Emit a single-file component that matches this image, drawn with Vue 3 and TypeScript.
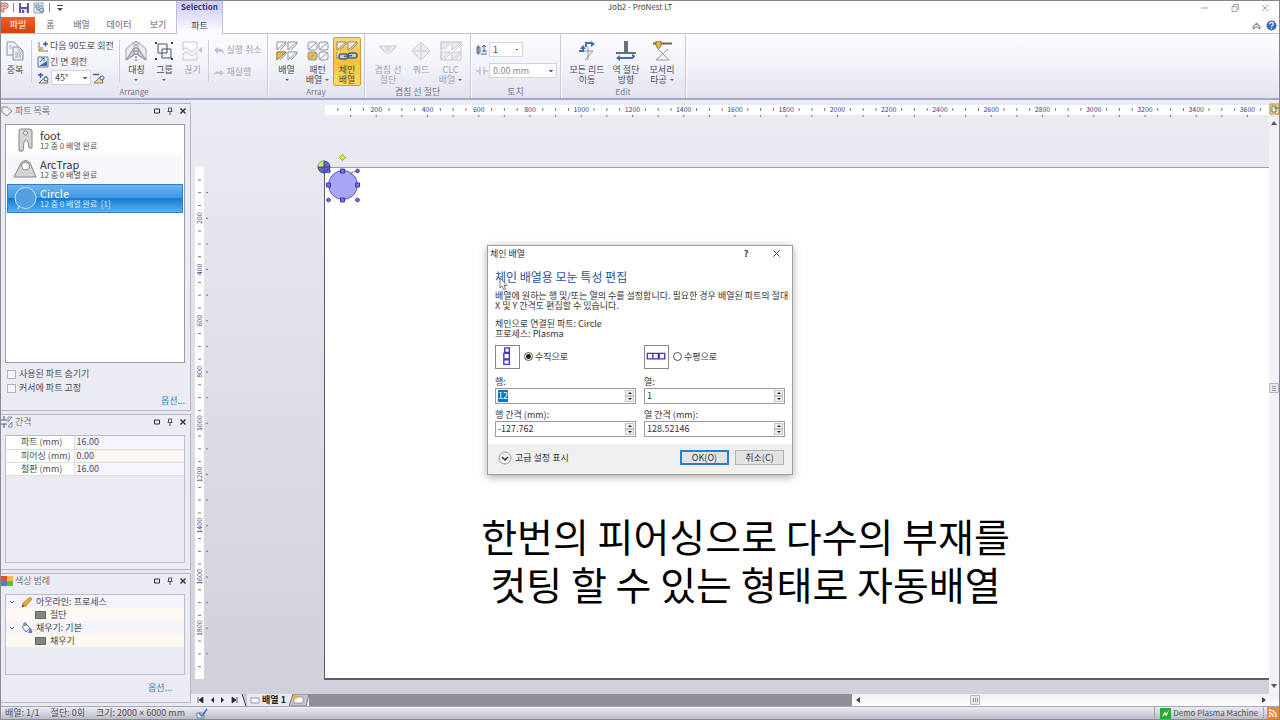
<script setup lang="ts">
import { computed, onBeforeUnmount, onMounted, ref } from 'vue'

interface Part { id: string; name: string; info: string; selected: boolean }
interface Field { id: string; label: string; value: string }

const tabs: string[] = ['홈', '배열', '데이터', '보기']
const parts: Part[] = [
  { id: 'bracket', name: 'foot', info: '12 중 0 배열 완료', selected: false },
  { id: 'arc', name: 'ArcTrap', info: '12 중 0 배열 완료', selected: false },
  { id: 'circle', name: 'Circle', info: '12 중 0 배열 완료  [1]', selected: true },
]
const spacing = [
  { label: '파트 (mm)', value: '16.00' },
  { label: '피어싱 (mm)', value: '0.00' },
  { label: '철판 (mm)', value: '16.00' },
]
const fields = ref<Field[]>([
  { id: 'rows', label: '행:', value: '12' },
  { id: 'cols', label: '열:', value: '1' },
  { id: 'rowgap', label: '행 간격 (mm):', value: '-127.762' },
  { id: 'colgap', label: '열 간격 (mm):', value: '128.52146' },
])
const direction = ref('vertical')
const hideUsed = ref(false)
const lockCursor = ref(false)
const angle = ref('45°')
const torch = ref('1')
const torchGap = ref('0.00 mm')

// The plate rulers carry a label every 200 mm.
const STEP = 51.25
const rulerWidth = ref(window.innerWidth - 336)
const makeLabels = (count: number) =>
  Array.from({ length: count }, (_, i) => ({ n: (i + 1) * 200, p: (i + 1) * STEP }))
const makeTicks = (count: number) =>
  Array.from({ length: count }, (_, i) => i + 1).map((i) => ({ i, p: (i * STEP) / 4 }))
const hLabels = computed(() => makeLabels(Math.max(0, Math.floor((rulerWidth.value - 10) / STEP))))
const hTicks = computed(() => makeTicks(Math.max(0, Math.floor((rulerWidth.value * 4) / STEP))))
const vLabels = makeLabels(9)
const vTicks = makeTicks(39)

const onResize = () => { rulerWidth.value = window.innerWidth - 336 }

onMounted(() => {
  window.addEventListener('resize', onResize)
  const el = document.getElementById('rows') as HTMLInputElement | null
  el?.focus()
  el?.select()
})
onBeforeUnmount(() => window.removeEventListener('resize', onResize))
</script>

<template>
  <div class="app">
    <svg class="defs" aria-hidden="true">
      <symbol id="tri" viewBox="0 0 22 20">
        <path d="M1 1h9L1 9zM12 1h9l-9 8zM1 11h9l-9 8zM12 11h9l-9 8z" />
        <path d="M10 1v2L4 9M21 1v2l-6 6M10 11v2l-6 6M21 11v2l-6 6" fill="none" />
      </symbol>
      <symbol id="ang" viewBox="0 0 12 12">
        <path d="M2 11h9L9 4z" fill="#ead9a0" stroke="#777" /><path d="M1 3h5M3.500 1v5" stroke="#3560a8" stroke-width="1.500" /><circle cx="9" cy="7" r="2" fill="#fff" stroke="#3560a8" />
      </symbol>
      <symbol id="ang2" viewBox="0 0 12 12">
        <path d="M1 11h9L8 4z" fill="#ead9a0" stroke="#777" /><path d="M0 2.500h6" stroke="#3560a8" stroke-width="1.500" /><circle cx="9" cy="6" r="2" fill="#fff" stroke="#3560a8" />
      </symbol>
    </svg>

    <header class="titlebar">
      <div class="left">
        <div class="quick">
          <svg class="logo" viewBox="0 0 9 12"><path d="M1 11V1h4q3 0 3 3t-3 3H3v4zM3 3v2h2q1 0 1-1t-1-1z" fill="#fff" stroke="#c33a3a" /></svg>
          <i></i>
          <button aria-label="저장"><svg viewBox="0 0 12 12"><path d="M1 1h10v10H1z" fill="#5b57a8" /><path d="M3 1h6v4H3z" fill="#fff" /><path d="M3 7h6v4H3z" fill="#dcdcf0" /><path d="M4 8h2v3H4z" fill="#5b57a8" /></svg></button>
          <button aria-label="설정"><svg viewBox="0 0 12 12"><path d="M1 1h9v10H1z" fill="#eef2f8" stroke="#8a9ab4" /><path d="M3 3h3v3H3zM7 4h2M3 8h3" fill="none" stroke="#55749c" /><circle cx="8.500" cy="8" r="2" fill="#cfe0f2" stroke="#55749c" /></svg></button>
          <i></i>
          <button aria-label="더 보기"><svg viewBox="0 0 12 12"><path d="M3 3h6v1H3zM3 6h6L6 9z" fill="#444" /></svg></button>
        </div>
        <div class="context">Selection</div>
      </div>
      <h1>Job2 - ProNest LT</h1>
      <div class="window">
        <button aria-label="최소화"><svg viewBox="0 0 10 10"><path d="M1 5h7" stroke="#a4a4a4" /></svg></button>
        <button aria-label="복원"><svg viewBox="0 0 10 10"><path d="M2 3.500h5v5H2zM3.500 3V1.500h5v5H7.500" fill="none" stroke="#a4a4a4" /></svg></button>
        <button aria-label="닫기"><svg viewBox="0 0 10 10"><path d="M2 2l6 6M8 2L2 8" stroke="#a4a4a4" /></svg></button>
      </div>
    </header>

    <nav class="tabs">
      <button class="file">파일</button>
      <button v-for="(t, i) in tabs" :key="t" :class="'t' + i">{{ t }}</button>
      <button class="active">파트</button>
      <span class="grow"></span>
      <button class="mini" aria-label="리본 축소"><svg viewBox="0 0 10 10"><path d="M2 6l3-3 3 3v2L5 6 2 8z" fill="#fff" stroke="#888" /></svg></button>
      <button class="mini" aria-label="도움말"><svg viewBox="0 0 12 12"><circle cx="6" cy="6" r="5.500" fill="#3a6fc0" /><path d="M4 4.600q0-2 2-2t2 1.800q0 1-1 1.500T6 7.300M6 8.400v1.400" fill="none" stroke="#fff" stroke-width="1.300" /></svg></button>
    </nav>

    <section class="ribbon">
      <div class="group g-arrange">
        <div class="tools">
          <button class="big w28"><svg viewBox="0 0 22 20"><path d="M3 1h7l4 4v9H3z" fill="#f4f6fa" stroke="#8a90a0" /><path d="M9 6h6l4 4v9H9z" fill="#e6eaf2" stroke="#8a90a0" /><path d="M15 6v4h4M5 5h3M5 7h3M11 12h6M11 14h6M11 16h6" fill="none" stroke="#a9b0c0" /></svg><span>중복</span></button>
          <i class="sep"></i>
          <div class="stack s-rot">
            <button><svg viewBox="0 0 12 12"><path d="M2 2v9h9" fill="none" stroke="#777" /><path d="M3 7h3v3H3z" fill="#d9b15c" /><path d="M6 4h5M8.500 1.500v5" stroke="#3560a8" stroke-width="1.500" /></svg>다음 90도로 회전</button>
            <button><svg viewBox="0 0 12 12"><path d="M1 1h10v10H1z" fill="#dfe7f4" stroke="#777" /><path d="M2 10L10 5v5z" fill="#3f6cb0" /><path d="M3 6l4-4M4 2h3v3" fill="none" stroke="#3f6cb0" /></svg>긴 면 회전</button>
            <div class="angle">
              <button aria-label="왼쪽 회전"><svg><use href="#ang" /></svg></button>
              <select v-model="angle" aria-label="각도"><option>45°</option></select>
              <button aria-label="오른쪽 회전"><svg><use href="#ang2" /></svg></button>
            </div>
          </div>
          <i class="sep"></i>
          <button class="big w28"><svg viewBox="0 0 22 20"><path d="M9 1v13L1 19V8zM13 1v13l8 5V8z" fill="#eceef1" stroke="#9a9da6" /><path d="M1 19L9 7v7zM21 19L13 7v7z" fill="#c6c9cf" stroke="#8b8e96" /><path d="M11 0v20" stroke="#555" stroke-dasharray="2 1" /></svg><span>대칭</span><b></b></button>
          <button class="big w28"><svg viewBox="0 0 22 20"><path d="M5 3h9v9H5zM9 8h9v9H9z" fill="none" stroke="#445566" /><path d="M2 1h2v2H2zM18 1h2v2h-2zM2 17h2v2H2zM18 17h2v2h-2z" fill="#334455" /></svg><span>그룹</span><b></b></button>
          <button class="big w28" disabled><svg viewBox="0 0 22 20"><path d="M2 9V1h14v6M2 9q3-4 6 0t8-2M2 13q3-4 6 0t8-2v8H2z" fill="none" stroke="#c9c9d2" /><path d="M21 6v6l-4-3z" fill="#c0c0ca" /></svg><span>끊기</span></button>
          <i class="sep"></i>
          <div class="stack s-undo">
            <button disabled><svg viewBox="0 0 12 12"><path d="M1 6l4-3v2q6-1 6 5-2-3-6-2v2z" fill="#c4c4cc" /></svg>실행 취소</button>
            <button disabled><svg viewBox="0 0 12 12"><path d="M11 7L7 4v2Q1 4 1 9q2-2 6-1v2z" fill="#c4c4cc" /></svg>재실행</button>
          </div>
        </div>
        <h2 class="latin">Arrange</h2>
      </div>
      <div class="group g-array">
        <div class="tools">
          <button class="big w31"><svg fill="#fbfcfd" stroke="#8a94a4"><use href="#tri" /><path d="M1 11h9l-9 8z" fill="#f0bd43" stroke="#a58535" /></svg><span>배열</span><b></b></button>
          <button class="big w31"><svg viewBox="0 0 22 20"><g fill="#f8f9fb" stroke="#8a94a4"><rect x="1" y="1" width="9" height="8" rx="2" /><rect x="12" y="1" width="9" height="8" rx="2" /><rect x="1" y="11" width="9" height="8" rx="2" fill="#f0bd43" /><rect x="12" y="11" width="9" height="8" rx="2" /><path d="M2 8l7-6M13 8l7-6M2 18l7-6M13 18l7-6" /></g></svg><span>패턴<br />배열 <b class="inl"></b></span></button>
          <button class="big chain"><svg viewBox="0 0 22 20"><path d="M1 1h9L1 9zM12 1h9l-9 8zM10 1v2L4 9M21 1v2l-6 6" fill="#fffdf4" stroke="#8a8470" /><path d="M1 11v7l4-4" fill="#fffdf4" stroke="#8a8470" /><g fill="#c3ced8" stroke="#4a627c" stroke-width="1.500"><rect x="3" y="13" width="9" height="5" rx="2.500" /><rect x="12" y="12" width="9" height="5" rx="2.500" /><path d="M8 15.500l8-1" /></g></svg><span>체인<br />배열</span></button>
        </div>
        <h2 class="latin">Array</h2>
      </div>
      <div class="group g-common">
        <div class="tools">
          <button class="big w38" disabled><svg viewBox="0 0 22 20"><path d="M2 5h18l-9 9z" fill="#dedee4" stroke="#cacad2" /><path d="M6 5l5 9 5-9" fill="none" stroke="#fff" /></svg><span>겹침 선<br />절단</span></button>
          <button class="big w28" disabled><svg viewBox="0 0 22 20"><path d="M11 1l9 9-9 9-9-9zM2 10h18M11 1v18" fill="#ececf1" stroke="#cacad2" /></svg><span>쿼드</span></button>
          <button class="big w31" disabled><svg fill="#ececf1" stroke="#cacad2"><use href="#tri" /><path d="M1 1h20v18H1z" fill="none" /></svg><span>CLC<br />배열 <b class="inl"></b></span></button>
        </div>
        <h2>겹침 선 절단</h2>
      </div>
      <div class="group g-torch">
        <div class="tools torch">
          <label><svg viewBox="0 0 12 12"><path d="M1 3h3v6H1zM2 1v10" fill="#b8c4d8" stroke="#556a8c" /><path d="M8 1v7M6 3l2-2 2 2M5 10h6M6 7h5" fill="none" stroke="#3560a8" /></svg><select v-model="torch" class="short" aria-label="토치 수"><option>1</option></select></label>
          <label><svg viewBox="0 0 12 12"><path d="M4 2v8M8 2v8M0 6h4M8 6h4" stroke="#c4c4c8" stroke-width="1.500" /></svg><select v-model="torchGap" class="wide" aria-label="토치 간격"><option>0.00 mm</option></select></label>
        </div>
        <h2>토치</h2>
      </div>
      <div class="group g-edit">
        <div class="tools">
          <button class="big w42"><svg viewBox="0 0 22 20"><path d="M4 10h13L9 19M12 6v13" fill="none" stroke="#8b93a0" /><path d="M3 10h4V7M10 6V2h5" fill="none" stroke="#3e6eb4" stroke-width="2" /><path d="M15 0l4 3-4 3zM4 8l3-4 3 4z" fill="#3e6eb4" /></svg><span>모든 리드<br />이동</span></button>
          <button class="big w36"><svg viewBox="0 0 22 20"><path d="M9 0h4v11H9z" fill="#66707c" /><path d="M1 12h20" stroke="#66707c" stroke-width="2" /><path d="M4 17h13q4-2 0-3" fill="none" stroke="#3e6eb4" stroke-width="2" /><path d="M5 14v6l-4-3z" fill="#3e6eb4" /></svg><span>역 절단<br />방향</span></button>
          <button class="big w36"><svg viewBox="0 0 22 20"><path d="M2 2.500h19" stroke="#706650" stroke-width="2" /><path d="M5 0h5v5l-2.500 3L5 5z" fill="#e7b845" stroke="#8c742e" /><path d="M7 8l11 11H5L17 8" fill="none" stroke="#999" /></svg><span>모서리<br />타공 <b class="inl"></b></span></button>
        </div>
        <h2 class="latin">Edit</h2>
      </div>
    </section>

    <main class="work">
      <aside class="side">
        <section class="panel parts">
          <header>
            <svg viewBox="0 0 12 12"><path d="M1 2h5l5 4-5 5-5-4z" fill="#f4f4f8" stroke="#888" /></svg>
            <h3>파트 목록</h3>
            <button aria-label="최대화"><svg viewBox="0 0 8 8"><path d="M1.500 2h5v4h-5z" fill="none" stroke="#333" /></svg></button>
            <button aria-label="고정"><svg viewBox="0 0 8 8"><path d="M2.500 1h3v3.500h-3zM1.500 4.500h5M4 5v3" fill="none" stroke="#555" /></svg></button>
            <button aria-label="닫기"><svg viewBox="0 0 8 8"><path d="M1.500 1.500l5 5M6.500 1.500l-5 5" stroke="#333" stroke-width="1.400" /></svg></button>
          </header>
          <ul class="box">
            <li v-for="p in parts" :key="p.id" :class="[p.id, { selected: p.selected }]">
              <svg v-if="p.id === 'bracket'" viewBox="0 0 24 24"><path d="M6 23V3q0-2 2-2h9q2 0 2 2v17h-3l-1-6q-2-4-4 0l-1 9z" fill="#d5d5d8" stroke="#85858a" /><circle cx="12.500" cy="5" r="2" fill="#fff" stroke="#85858a" /></svg>
              <svg v-else-if="p.id === 'arc'" viewBox="0 0 24 24"><path d="M1 20L8 6q5-5 9 0l6 14z" fill="#d5d5d8" stroke="#85858a" /><circle cx="12.500" cy="9" r="4" fill="#fff" stroke="#85858a" /></svg>
              <svg v-else viewBox="0 0 24 24"><circle cx="12.500" cy="12" r="10.500" fill="#52a0e2" stroke="#cfe6fa" /><path d="M6 20l-1 3" stroke="#fff" /></svg>
              <div><strong>{{ p.name }}</strong><span>{{ p.info }}</span></div>
            </li>
          </ul>
          <label class="check"><input v-model="hideUsed" type="checkbox" />사용된 파트 숨기기</label>
          <label class="check"><input v-model="lockCursor" type="checkbox" />커서에 파트 고정</label>
          <a href="#">옵션...</a>
        </section>

        <section class="panel gap">
          <header>
            <svg viewBox="0 0 12 12"><path d="M0 4h6M0 8h6M3 0v4M3 8v4" stroke="#4a5a90" /><path d="M7 1h4L7 6zM11 6v5H7z" fill="none" stroke="#8890b0" /></svg>
            <h3>간격</h3>
            <button aria-label="최대화"><svg viewBox="0 0 8 8"><path d="M1.500 2h5v4h-5z" fill="none" stroke="#333" /></svg></button>
            <button aria-label="고정"><svg viewBox="0 0 8 8"><path d="M2.500 1h3v3.500h-3zM1.500 4.500h5M4 5v3" fill="none" stroke="#555" /></svg></button>
            <button aria-label="닫기"><svg viewBox="0 0 8 8"><path d="M1.500 1.500l5 5M6.500 1.500l-5 5" stroke="#333" stroke-width="1.400" /></svg></button>
          </header>
          <div class="box">
            <table>
              <tbody>
                <tr v-for="r in spacing" :key="r.label"><th scope="row">{{ r.label }}</th><td>{{ r.value }}</td></tr>
              </tbody>
            </table>
          </div>
        </section>

        <section class="panel legend">
          <header>
            <svg viewBox="0 0 12 12"><path d="M0 1h6v5H0z" fill="#d8503c" /><path d="M6 1h6v5H6z" fill="#f0c040" /><path d="M0 6h6v5H0z" fill="#4a7fd8" /><path d="M6 6h6v5H6z" fill="#68b848" /></svg>
            <h3>색상 범례</h3>
            <button aria-label="최대화"><svg viewBox="0 0 8 8"><path d="M1.500 2h5v4h-5z" fill="none" stroke="#333" /></svg></button>
            <button aria-label="고정"><svg viewBox="0 0 8 8"><path d="M2.500 1h3v3.500h-3zM1.500 4.500h5M4 5v3" fill="none" stroke="#555" /></svg></button>
            <button aria-label="닫기"><svg viewBox="0 0 8 8"><path d="M1.500 1.500l5 5M6.500 1.500l-5 5" stroke="#333" stroke-width="1.400" /></svg></button>
          </header>
          <div class="box tree">
            <div class="node"><svg viewBox="0 0 12 12"><path d="M4 5l2 2 2-2" fill="none" stroke="#555" /></svg><svg class="ic" viewBox="0 0 12 12"><path d="M1 11l1-4 7-6 2 2-6 7z" fill="#eaa83c" stroke="#b07820" stroke-width=".7" /><path d="M1 11l.7-2.500L3.500 10z" fill="#444" /></svg>아웃라인: 프로세스</div>
            <div class="leaf"><i></i>절단</div>
            <div class="node"><svg viewBox="0 0 12 12"><path d="M4 5l2 2 2-2" fill="none" stroke="#555" /></svg><svg class="ic" viewBox="0 0 12 12"><path d="M1 5l4-3 4 4-4 4z" fill="#f4f4fa" stroke="#6c7280" /><path d="M3 4V1h2v3" fill="none" stroke="#6c7280" /><path d="M9 6q3 2 2 5H7z" fill="#5d84c0" /></svg>채우기: 기본</div>
            <div class="leaf"><i></i>채우기</div>
          </div>
          <a href="#">옵션...</a>
        </section>
      </aside>

      <section class="stage">
        <div class="hruler">
          <div class="strip"></div>
          <svg>
            <template v-for="t in hTicks" :key="t.i">
              <path v-if="t.i % 4" :d="`M${t.p} 8v3`" stroke="#777" />
              <path v-if="t.i % 2 === 0" :d="`M${t.p} 15v2`" stroke="#777" />
            </template>
            <text v-for="l in hLabels" :key="l.n" :x="l.p" y="12" text-anchor="middle">{{ l.n }}</text>
          </svg>
        </div>
        <div class="corner"><button aria-label="보기 맞춤"><svg viewBox="0 0 10 12"><path d="M1 1h9v10H1z" fill="#f7e2a0" stroke="#b89030" /><path d="M3 3h4v6H3zM5 5h5" fill="#fff" stroke="#666" /></svg></button></div>
        <div class="vruler">
          <div class="strip"></div>
          <svg>
            <template v-for="t in vTicks" :key="t.i">
              <path v-if="t.i % 4" :d="`M7 ${t.p}h3`" stroke="#777" />
              <path v-if="t.i % 2 === 0" :d="`M15 ${t.p}h2`" stroke="#777" />
            </template>
            <text v-for="l in vLabels" :key="l.n" :transform="`translate(11 ${l.p}) rotate(-90)`" text-anchor="middle">{{ l.n }}</text>
          </svg>
        </div>
        <div class="canvas">
          <div class="sheet">
            <svg class="nest" viewBox="317 153 46 52">
              <circle cx="324" cy="167" r="6" fill="#6468dc" stroke="#444a80" />
              <path d="M324 167v-6a6 6 0 0 0-6 6z" fill="#d8f04a" /><path d="M324 161v12M318 167h12" stroke="#444455" />
              <circle cx="343" cy="185" r="14.500" fill="#a9a5f8" stroke="#605c98" />
              <path d="M351 175q0-4 4-3" fill="none" stroke="#777" />
              <path d="M342.500 154.500l3 3-3 3-3-3z" fill="#e4f63c" stroke="#8ea020" />
              <g fill="#7470ec" stroke="#3c38a8"><path d="M340.500 169h4v4h-4zM340.500 198h4v4h-4zM326.500 183h4v4h-4zM355.500 183h4v4h-4z" /><circle cx="328.500" cy="171" r="1.800" /><circle cx="357.500" cy="171" r="1.800" /><circle cx="328.500" cy="200" r="1.800" /><circle cx="357.500" cy="200" r="1.800" /></g>
            </svg>
          </div>
          <p class="caption">한번의 피어싱으로 다수의 부재를<br />컷팅 할 수 있는 형태로 자동배열</p>
        </div>
        <div class="vscroll">
          <button aria-label="위로"><svg viewBox="0 0 8 8"><path d="M1 6h6L4 2z" fill="#555" /></svg></button>
          <i class="before"></i>
          <button class="thumb" aria-label="세로 스크롤"><svg viewBox="0 0 8 8"><path d="M2 2.500h4M2 4.500h4M2 6.500h4" stroke="#999" /></svg></button>
          <i class="after"></i>
          <button aria-label="아래로"><svg viewBox="0 0 8 8"><path d="M1 2h6L4 6z" fill="#555" /></svg></button>
        </div>
        <div class="sheets">
          <div class="nav">
            <button aria-label="처음"><svg viewBox="0 0 8 8"><path d="M2 1v6M7 1v6L3 4z" fill="#222233" stroke="#222233" stroke-width=".7" /></svg></button>
            <button aria-label="이전"><svg viewBox="0 0 8 8"><path d="M6 1v6L3 4z" fill="#222233" /></svg></button>
            <button aria-label="다음"><svg viewBox="0 0 8 8"><path d="M2 1v6l3-3z" fill="#222233" /></svg></button>
            <button aria-label="마지막"><svg viewBox="0 0 8 8"><path d="M6 1v6M1 1v6l4-3z" fill="#222233" stroke="#222233" stroke-width=".7" /></svg></button>
          </div>
          <svg class="slant" viewBox="0 0 6 12"><path d="M1 0h5v12H5z" fill="#c4c4cc" /><path d="M1 0l4 12" stroke="#44444c" /></svg>
          <button class="sheet-tab"><svg viewBox="0 0 10 8"><path d="M1 2h8v5H1z" fill="#fff" stroke="#999" /></svg>배열 1</button>
          <button class="new-tab" aria-label="새 배열"><svg viewBox="0 0 20 12"><path d="M4 0h16l-3 12H0z" fill="#c4c4cc" stroke="#77777e" /><path d="M5 3h9v6H5z" fill="#fff" stroke="#999" /><path d="M4 1h4v4H4z" fill="#f0b030" /></svg></button>
          <div class="fill"></div>
          <div class="hscroll">
            <button aria-label="왼쪽으로"><svg viewBox="0 0 8 8"><path d="M6 1v6L2 4z" fill="#444" /></svg></button>
            <i class="before"></i>
            <button class="thumb" aria-label="가로 스크롤"><svg viewBox="0 0 8 8"><path d="M2.500 2v4M4.500 2v4M6.500 2v4" stroke="#999" /></svg></button>
            <i class="after"></i>
            <button aria-label="오른쪽으로"><svg viewBox="0 0 8 8"><path d="M2 1v6l4-3z" fill="#444" /></svg></button>
          </div>
        </div>
      </section>
    </main>

    <footer class="status">
      <span>배열: 1/1</span><span>절단: 0회</span><span>크기: 2000 <i class="times">×</i> 6000 mm</span>
      <svg class="edge" viewBox="0 0 12 12"><path d="M1 6h7v5H1z" fill="#dbe4f2" stroke="#6c86b4" /><path d="M3 6l3 3 5-7" fill="none" stroke="#4a74c0" stroke-width="1.500" /></svg>
      <span class="grow"></span>
      <span class="machine"><svg viewBox="0 0 12 12"><path d="M0 0h12v12H0z" fill="#2ba83a" /><path d="M2 10l3-6 2 2 3-4-3 7-2-2z" fill="#fff" /></svg>Demo Plasma Machine</span>
      <svg class="rss" viewBox="0 0 12 12"><path d="M0 0h12v12H0z" fill="#ea8a3c" /><path d="M2 6q4 0 4 4M2 3q7 0 7 7" fill="none" stroke="#fff" stroke-width="1.300" /><circle cx="3" cy="9" r="1" fill="#fff" /></svg>
    </footer>

    <div class="overlay">
      <form class="dialog" role="dialog" aria-labelledby="dlg-title" @submit.prevent>
        <div class="bar">
          <span id="dlg-title">체인 배열</span>
          <button type="button" aria-label="도움말">?</button>
          <button type="button" aria-label="닫기"><svg viewBox="0 0 10 10"><path d="M1.500 1.500l7 7M8.500 1.500l-7 7" stroke="#333" /></svg></button>
        </div>
        <div class="body">
          <h2>체인 배열용 모눈 특성 편집</h2>
          <p>배열에 원하는 행 및/또는 열의 수를 설정합니다. 필요한 경우 배열된 파트의 절대<br />X 및 Y 간격도 편집할 수 있습니다.</p>
          <p>체인으로 연결된 파트: Circle<br />프로세스: Plasma</p>
          <div class="pair radios">
            <label><svg viewBox="0 0 24 24"><g fill="#fff" stroke="#4038c0" stroke-width="1.500"><path d="M9 2h5v5H9zM8 8h6v6H8zM8 15h6v5H8z" /></g></svg><input v-model="direction" type="radio" name="dir" value="vertical" />수직으로</label>
            <label><svg viewBox="0 0 24 24"><g fill="#fff" stroke="#4038c0" stroke-width="1.500"><path d="M2 8h6v6H2zM8 8h6v6H8zM15 8h6v6h-6z" /></g></svg><input v-model="direction" type="radio" name="dir" value="horizontal" />수평으로</label>
          </div>
          <div class="pair fields">
            <div v-for="f in fields" :key="f.id" class="field">
              <label :for="f.id">{{ f.label }}</label>
              <div class="spin">
                <input :id="f.id" v-model="f.value" type="text" />
                <span><button type="button" aria-label="증가"><svg viewBox="0 0 6 4"><path d="M1 3h4L3 1z" fill="#222" /></svg></button><button type="button" aria-label="감소"><svg viewBox="0 0 6 4"><path d="M1 1h4L3 3z" fill="#222" /></svg></button></span>
              </div>
            </div>
          </div>
        </div>
        <div class="foot">
          <button type="button" class="more"><svg viewBox="0 0 14 14"><circle cx="7" cy="7" r="6" fill="#f4f4f4" stroke="#999" /><path d="M4 6l3 3 3-3" fill="none" stroke="#333" stroke-width="1.500" /></svg>고급 설정 표시</button>
          <button type="submit" class="ok">OK(O)</button>
          <button type="button" class="cancel">취소(C)</button>
        </div>
        <svg class="cursor" viewBox="0 0 9 14"><path d="M1 1v10l2-2 2 4 1.500-1L5 8.500h3z" fill="#fff" stroke="#555" stroke-width=".8" /></svg>
      </form>
    </div>
  </div>
</template>

<style>
html, body { height: 100%; }
body { margin: 0; overflow: hidden; }
</style>

<style scoped>
.app {
  position: relative; display: flex; flex-direction: column; box-sizing: border-box; height: 100vh;
  border-top: 1px solid #85858a; border-left: 1px solid #8a8a94; border-right: 1px solid #85858a;
  background: #e9e9f2; color: #4c4c56;
  font: 9px/12px "Noto Sans CJK KR", "Open Sans", sans-serif;
}
.app *, .app *::before { box-sizing: border-box; }
button, input, select { font: inherit; color: inherit; margin: 0; padding: 0; border: 0; background: none; }
button { display: flex; align-items: center; justify-content: center; white-space: nowrap; }
h1, h2, h3, p, ul { margin: 0; padding: 0; font: inherit; }
i { font-style: normal; }
svg { display: block; flex: none; }
a { color: #2e84c4; text-decoration: none; }
.defs { position: absolute; width: 0; height: 0; }
.grow { flex: 1; }

.titlebar { display: grid; grid-template-columns: 1fr auto 1fr; flex: none; height: 16px; background: #fff; }
.left { display: flex; }
.quick { display: flex; align-items: center; gap: 3px; width: 175px; padding-bottom: 3px; }
.quick .logo { width: 8px; height: 11px; }
.quick i { width: 1px; height: 9px; margin: 0 1px; background: #888; }
.quick button svg { width: 12px; height: 12px; }
.context { width: 47px; border: solid #bcb8e2; border-width: 0 1px; background: linear-gradient(#cfcbf4, #e4e2fb); color: #33337a; font-size: 8px; font-weight: 700; line-height: 12px; text-align: center; }
.titlebar h1 { font-size: 8px; line-height: 12px; color: #444; }
.window { display: flex; align-items: center; justify-content: flex-end; gap: 20px; padding: 0 9px 2px 0; }
.window button svg { width: 10px; height: 10px; }
.tabs { display: flex; flex: none; height: 17px; background: #fff; border-bottom: 1px solid #c4c4cc; }
.tabs button { width: 38px; color: #666; }
.tabs .file { width: 34px; margin-right: 1px; background: linear-gradient(#f0622c, #d3410c); color: #fff; }
.tabs .t0 { width: 29px; }
.tabs .t1 { width: 33px; }
.tabs .t2 { width: 42px; }
.tabs .t3 { width: 36px; }
.tabs .active { width: 47px; height: 17px; border: solid #c0bfe0; border-width: 0 1px; background: linear-gradient(#e4e2fb, #fff); color: #444; }
.tabs button.mini { width: 15px; }
.mini svg { width: 11px; height: 11px; }

.ribbon { display: flex; flex: none; height: 66px; background: linear-gradient(#fdfdff, #f4f4fc 40%, #e3e3f0); border-bottom: 2px solid #a4a8cc; }
.group { display: flex; flex-direction: column; flex: none; padding-top: 3px; border-right: 1px solid #c9c9d8; box-shadow: 1px 0 #fff; }
.group h2 { line-height: 12px; text-align: center; color: #777780; }
.group h2.latin { font-size: 8px; }
.g-arrange { width: 267px; }
.g-array { width: 97px; }
.g-common { width: 106px; }
.g-torch { width: 90px; }
.g-edit { width: 125px; }
.tools { display: flex; height: 49px; justify-content: center; }
.big { flex: none; flex-direction: column; justify-content: flex-start; height: 49px; padding-top: 4px; line-height: 10px; }
.big svg { width: 22px; height: 20px; margin-bottom: 4px; }
.big b { display: block; margin-top: 4px; border: 2px solid transparent; border-top-color: #666; }
.big .inl { display: inline-block; margin: 0 0 0 1px; }
.w28 { width: 28px; }
.w31 { width: 31px; }
.w36 { width: 36px; }
.w38 { width: 38px; }
.w42 { width: 42px; }
.chain { width: 28px; border: 1px solid #d39a35; border-radius: 2px; background: linear-gradient(#fbd877, #f5c13c 50%, #fbdc6c); padding-top: 3px; color: #5a4612; }
button:disabled { color: #a4a4ac; }
.sep { width: 1px; height: 42px; margin: 3px 2px; background: #d0d0dc; }
.stack { display: flex; flex-direction: column; padding: 1px 0 0 3px; }
.stack button { justify-content: flex-start; gap: 1px; height: 16px; }
.stack button svg { width: 12px; height: 12px; }
.s-rot { width: 84px; }
.s-undo { width: 56px; padding: 5px 0 0 2px; gap: 6px; }
.angle { display: flex; gap: 2px; }
select {
  appearance: none; height: 15px; border: 1px solid #d4d4de; padding: 0 3px; color: #444;
  background: linear-gradient(45deg, transparent 50%, #666 50%) no-repeat right 5px center / 2px 2px,
    linear-gradient(-45deg, transparent 50%, #666 50%) no-repeat right 3px center / 2px 2px, #fff;
}
.angle select { width: 40px; }
.torch { flex-direction: column; justify-content: flex-start; padding: 5px 0 0 5px; gap: 6px; }
.torch label { display: flex; align-items: center; gap: 1px; }
.torch label svg { width: 12px; height: 12px; }
.torch .short { width: 34px; }
.torch .wide { width: 68px; color: #888; }

.work { display: flex; flex: 1; min-height: 0; }
.side { display: flex; flex-direction: column; gap: 3px; flex: none; width: 190px; padding: 3px 0; }
.panel { display: flex; flex-direction: column; padding: 0 5px 0 4px; border: 1px solid #b6b6c4; border-left: 0; background: #ebebf3; }
.panel header { display: flex; align-items: center; flex: none; height: 14px; margin: 0 -5px 6px -4px; padding-right: 1px; }
.panel header > svg { width: 12px; height: 12px; margin-right: 2px; }
.panel h3 { flex: 1; color: #777780; }
.panel header button { width: 13px; }
.panel header button svg { width: 8px; height: 8px; }
.panel.parts { flex: 1; min-height: 0; }
.panel.gap { height: 156px; padding-bottom: 6px; }
.panel.legend { height: 130px; }
.box { flex: 1; border: 1px solid #bcbcca; min-height: 0; }
.parts .box { margin-bottom: 4px; padding: 1px; background: #fff; border-color: #9c9ca8; list-style: none; overflow: hidden; }
.parts li { display: flex; gap: 3px; align-items: center; height: 29px; padding: 0 0 2px 6px; color: #555; }
.parts li.arc { background: #f8f7fb; }
.parts li svg { width: 24px; height: 24px; }
.parts li strong { display: block; font-size: 11px; font-weight: 400; line-height: 12px; color: #333; }
.parts li span { display: block; font-size: 8px; line-height: 10px; white-space: pre; }
.parts li.selected { border: 1px solid #2f80c8; background: linear-gradient(#6db4ee, #3d98e4 48%, #1479d2 50%, #5cb0f0); color: #d6eaff; padding-left: 5px; }
.parts li.selected strong { color: #fff; }
.check { display: flex; align-items: center; gap: 3px; height: 14px; }
.check input { appearance: none; width: 9px; height: 9px; margin-left: 2px; border: 1px solid #b4b4c0; background: #f4f4f8; }
.panel > a { align-self: flex-end; height: 15px; line-height: 12px; }
.legend > a { margin-right: 13px; height: 27px; line-height: 26px; }
table { width: 100%; border-collapse: collapse; }
tr { height: 13px; background: #f6f4fd; }
tr:nth-child(2) { background: #fdf6f0; }
th, td { padding: 0 0 0 2px; border-bottom: 1px solid #deded8; font-weight: 400; text-align: left; line-height: 12px; }
th { width: 68px; padding-left: 15px; background: #fff; border-right: 1px solid #dcdce6; }
.node, .leaf { display: flex; align-items: center; height: 13px; background: #f5f4fd; color: #444; }
.node svg { width: 12px; height: 12px; }
.node .ic { margin: 0 3px; }
.leaf { padding-left: 29px; background: #fdf8f0; }
.leaf i { width: 11px; height: 8px; margin-right: 4px; border: 1px solid #666; background: #858585; }

.stage { display: grid; grid-template: 17px 1fr 12px / 17px 1fr 10px; flex: 1; min-width: 0; background: linear-gradient(#ebebf3, #d0d0da); }
.stage text { font-size: 7px; fill: #3c3c80; }
.hruler { position: relative; grid-column: 2; margin-left: 117px; overflow: hidden; }
.hruler .strip { height: 10px; margin-top: 5px; background: #fff; }
.hruler svg { position: absolute; inset: 0; width: 100%; height: 17px; }
.corner { grid-column: 3; padding-top: 3px; }
.corner svg { width: 10px; height: 12px; }
.vruler { position: relative; grid-area: 2 / 1; margin: 50px 0 15px; }
.vruler .strip { width: 9px; height: 100%; margin-left: 4px; background: #fff; }
.vruler svg { position: absolute; inset: 0; width: 17px; height: 100%; }
.canvas { position: relative; display: flex; grid-area: 2 / 2; padding: 50px 0 14px 116px; }
.sheet { position: relative; flex: 1; border: solid #5c5c64; border-width: 1px 0 2px 1px; border-top-color: #9c9ca6; background: #fff; }
.nest { position: absolute; left: -8px; top: -15px; width: 46px; height: 52px; }
.caption { position: absolute; left: 14px; right: 0; bottom: 87px; font-size: 39px; line-height: 48px; text-align: center; color: #000; }
.vscroll { display: flex; flex-direction: column; align-items: center; grid-area: 2 / 3; padding: 2px 0 4px; background: #f1f1f7; }
.vscroll svg { width: 8px; height: 8px; }
.vscroll .before { flex: 47; }
.vscroll .after { flex: 53; }
.thumb { width: 10px; height: 10px; border: 1px solid #b8b8c4; border-radius: 1px; background: #e6e6ee; }
.sheets { display: flex; grid-column: 1 / 4; background: #ececf3; }
.nav { display: flex; align-items: center; justify-content: space-between; width: 50px; padding: 0 2px 0 5px; }
.nav svg, .hscroll svg { width: 8px; height: 8px; }
.slant { width: 6px; height: 12px; }
.sheet-tab { gap: 2px; width: 42px; background: #e8e8ee; color: #222; font-weight: 700; }
.sheet-tab svg { width: 10px; height: 8px; }
.new-tab svg { width: 20px; height: 12px; }
.fill { flex: 567; background: #8f8f96; }
.hscroll { display: flex; flex: 433; align-items: center; padding: 0 11px 0 2px; background: linear-gradient(#eeeef4, #fff); }
.hscroll .before { flex: 28; }
.hscroll .after { flex: 72; }

.status { display: flex; flex: none; align-items: center; height: 14px; padding: 0 0 0 4px; border-top: 1px solid #a8a8b4; border-bottom: 1px solid #8a8a90; background: linear-gradient(#ececf2, #bcbcc8); color: #50505c; }
.status span + span:not(.machine) { margin-left: 11px; }
.times { font-family: "Liberation Sans", sans-serif; }
.status .edge { width: 12px; height: 12px; margin-left: 11px; }
.status .machine { display: flex; align-items: center; gap: 2px; padding: 0 5px; border: solid #a8a8b4; border-width: 0 1px; font-size: 8px; }
.machine svg { width: 11px; height: 11px; }
.status .rss { width: 12px; height: 12px; margin-left: 3px; }

.overlay { position: absolute; inset: 0; display: grid; place-items: center; padding-bottom: 2px; }
.dialog { position: relative; width: 306px; border: 1px solid #a0a0a6; background: #fff; color: #333; box-shadow: 0 2px 8px rgba(0, 0, 0, .35); }
.bar { display: flex; align-items: center; height: 16px; padding: 0 11px 0 2px; }
.bar span { flex: 1; }
.bar button { width: 10px; margin-left: 20px; font-weight: 700; }
.bar svg { width: 9px; height: 9px; }
.body { height: 182px; padding: 6px 7px 0; }
.body h2 { height: 23px; font-size: 12px; line-height: 18px; color: #2c529c; }
.body p { height: 28px; line-height: 10px; white-space: nowrap; }
.body p + p { height: 26px; }
.pair { display: grid; grid-template-columns: 1fr 1fr; column-gap: 8px; }
.radios label { display: flex; align-items: center; height: 24px; }
.radios svg { width: 25px; height: 24px; border: 1px solid #888; }
.radios input { appearance: none; width: 9px; height: 9px; margin: 0 2px 0 4px; border: 1px solid #555; border-radius: 50%; background: #fff; }
.radios input:checked { background: radial-gradient(circle, #222 0 2px, #fff 3px); }
.fields { padding-top: 7px; row-gap: 5px; }
.field label { display: block; height: 12px; }
.spin { display: flex; height: 16px; border: 1px solid #9a9aa0; background: #fff; }
.spin input { flex: 1; min-width: 0; padding-left: 2px; outline: 0; line-height: 12px; }
.spin input::selection { background: #0b72cc; color: #fff; }
.spin span { display: flex; flex-direction: column; width: 11px; padding: 1px; }
.spin button { flex: 1; border: 1px solid #c4c4c8; background: #efeff1; }
.spin svg { width: 6px; height: 4px; }
.foot { display: flex; align-items: center; gap: 6px; height: 30px; padding: 0 8px 2px 10px; background: #f0f0f1; }
.foot .more { gap: 3px; margin-right: auto; }
.more svg { width: 14px; height: 14px; }
.ok, .cancel { width: 49px; height: 15px; border: 1px solid #b0b0b6; background: #e3e3e6; }
.ok { border: 2px solid #2580cc; }
.cursor { position: absolute; left: 11px; top: 31px; width: 9px; height: 14px; }
</style>
